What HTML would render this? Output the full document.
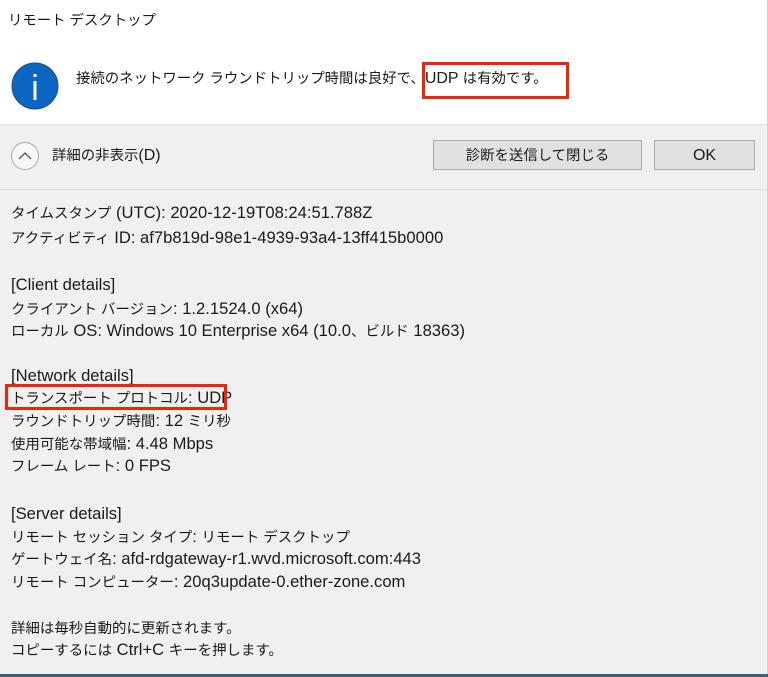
<!DOCTYPE html>
<html><head><meta charset="utf-8"><style>
body{margin:0;width:768px;height:677px;position:relative;overflow:hidden;background:#fff;font-family:"Liberation Sans","Noto Sans CJK JP",sans-serif;color:#1a1a1a}
.a{position:absolute;white-space:nowrap}
.j{font-size:0.9em}
.t .j{font-size:0.87em}
.band{position:absolute;left:0;top:124px;width:768px;height:64px;background:#f0f0f0;border-top:1px solid #e3e3e3;border-bottom:1px solid #dcdcdc}
.det{position:absolute;left:0;top:190px;width:767px;height:484px;background:#f0f0f0}
.btn{position:absolute;top:140px;height:30px;background:#e1e1e1;border:1px solid #adadad;font-size:16px;line-height:30px;text-align:center;box-sizing:border-box}
.t{position:absolute;left:11px;font-size:16.6px;line-height:22px;white-space:nowrap}
.box{position:absolute;border:3px solid #f0230f;box-sizing:border-box}
</style></head><body>
<div class="a" style="left:8px;top:9px;font-size:16px"><span class="j">リモート デスクトップ</span></div>
<svg class="a" style="left:11px;top:62px" width="48" height="48"><circle cx="24" cy="24" r="23" fill="#0a66c2" stroke="#1c4f8a" stroke-width="1"/><rect x="22.5" y="19" width="3" height="19" fill="#fff"/><rect x="22.5" y="12" width="3" height="3" fill="#fff"/></svg>
<div class="a" style="left:76px;top:67px;font-size:16px"><span class="j">接続のネットワーク ラウンドトリップ時間は良好で、</span>UDP <span class="j">は有効です。</span></div>
<div class="box" style="left:422px;top:62px;width:147px;height:37px"></div>
<div class="band"></div>
<svg class="a" style="left:10px;top:141px" width="30" height="30"><circle cx="15" cy="15" r="13.5" fill="#f7f7f7" stroke="#a8a8a8" stroke-width="1"/><path d="M9 18 L15 12 L21 18" fill="none" stroke="#555" stroke-width="1.3"/></svg>
<div class="a" style="left:52px;top:144px;font-size:16px"><span class="j">詳細の非表示</span>(D)</div>
<div class="btn" style="left:433px;width:209px"><span class="j">診断を送信して閉じる</span></div>
<div class="btn" style="left:654px;width:101px">OK</div>
<div class="det"></div>
<div style="position:absolute;left:767px;top:0;width:1px;height:677px;background:#d0d0d0"></div>
<div style="position:absolute;left:0;top:674px;width:768px;height:3px;background:#3a5f80"></div>
<div class="t" style="top:202px"><span class="j">タイムスタンプ</span> (UTC): 2020-12-19T08:24:51.788Z</div>
<div class="t" style="top:227px"><span class="j">アクティビティ</span> ID: af7b819d-98e1-4939-93a4-13ff415b0000</div>
<div class="t" style="top:274px">[Client details]</div>
<div class="t" style="top:298px"><span class="j">クライアント バージョン</span>: 1.2.1524.0 (x64)</div>
<div class="t" style="top:320px"><span class="j">ローカル</span> OS: Windows 10 Enterprise x64 (10.0<span class="j">、ビルド</span> 18363)</div>
<div class="t" style="top:365px">[Network details]</div>
<div class="t" style="top:387px"><span class="j">トランスポート プロトコル</span>: UDP</div>
<div class="box" style="left:5px;top:384px;width:222px;height:26px"></div>
<div class="t" style="top:410px"><span class="j">ラウンドトリップ時間</span>: 12 <span class="j">ミリ秒</span></div>
<div class="t" style="top:433px"><span class="j">使用可能な帯域幅</span>: 4.48 Mbps</div>
<div class="t" style="top:455px"><span class="j">フレーム レート</span>: 0 FPS</div>
<div class="t" style="top:503px">[Server details]</div>
<div class="t" style="top:526px"><span class="j">リモート セッション タイプ</span>: <span class="j">リモート デスクトップ</span></div>
<div class="t" style="top:548px"><span class="j">ゲートウェイ名</span>: afd-rdgateway-r1.wvd.microsoft.com:443</div>
<div class="t" style="top:571px"><span class="j">リモート コンピューター</span>: 20q3update-0.ether-zone.com</div>
<div class="t" style="top:617px"><span class="j">詳細は毎秒自動的に更新されます。</span></div>
<div class="t" style="top:639px"><span class="j">コピーするには</span> Ctrl+C <span class="j">キーを押します。</span></div>
</body></html>
